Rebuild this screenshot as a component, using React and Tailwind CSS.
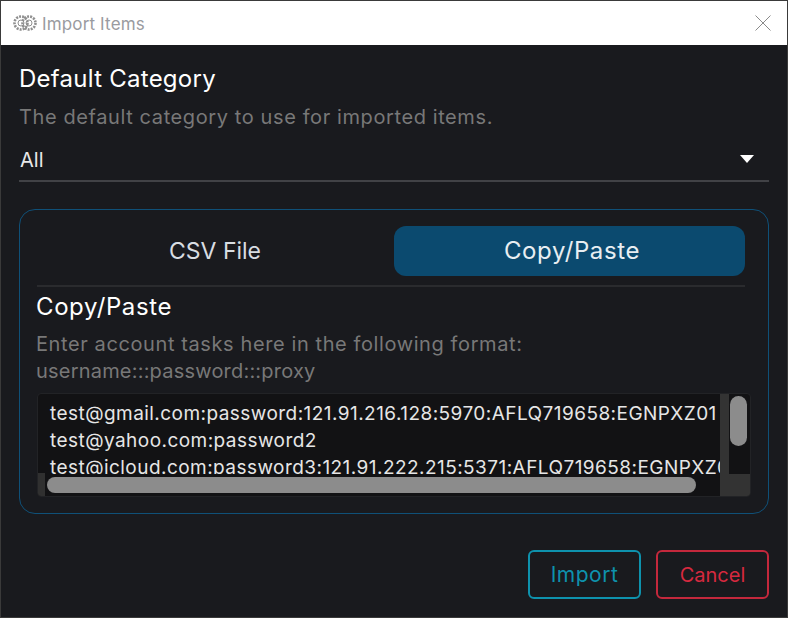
function GearLogo() {
  return (
    <svg width="24" height="18" viewBox="0 0 24 18" fill="none" stroke="#8f8f8f">
      <circle cx="8" cy="9" r="6.5" strokeWidth="2.6" strokeDasharray="2 1.1" />
      <circle cx="16" cy="9" r="6.5" strokeWidth="2.6" strokeDasharray="2 1.1" />
      <circle cx="8" cy="9" r="3" strokeWidth="1" />
      <circle cx="16" cy="9" r="3" strokeWidth="1" />
    </svg>
  );
}

function CloseIcon() {
  return (
    <svg width="16" height="16" viewBox="0 0 16 16" stroke="#8a8a8a" strokeWidth="1">
      <path d="M0.5 0.5 L15.5 15.5 M15.5 0.5 L0.5 15.5" />
    </svg>
  );
}

export default function App() {
  const lines = [
    "test@gmail.com:password:121.91.216.128:5970:AFLQ719658:EGNPXZ01",
    "test@yahoo.com:password2",
    "test@icloud.com:password3:121.91.222.215:5371:AFLQ719658:EGNPXZ01",
  ];

  return (
    <div className="h-[618px] w-[788px] overflow-hidden bg-[#191a1e] border border-[#3a3a3a] font-['Inter',sans-serif]">
      <div className="flex h-[44px] items-center justify-between bg-white pl-[12px] pr-[16px]">
        <div className="flex items-center gap-[5px]">
          <GearLogo />
          <span className="mt-[3px] text-[17px] tracking-[0.15px] text-[#9a9ba0]">Import Items</span>
        </div>
        <CloseIcon />
      </div>

      <div className="px-[18px] pt-[16px]">
        <h2 className="text-[24px] leading-[36px] tracking-[0.25px] text-white">Default Category</h2>
        <p className="mt-[6px] text-[20px] leading-[28px] tracking-[0.6px] text-[#787878]">
          The default category to use for imported items.
        </p>

        <div className="mt-[7px] flex h-[44px] items-center justify-between border-b-2 border-[#414246] pl-[1px] pr-[15px]">
          <span className="mt-[1px] text-[20px] text-[#e8e8e8]">All</span>
          <div className="h-0 w-0 border-x-[7.5px] border-t-[8px] border-x-transparent border-t-white" />
        </div>

        <div className="mt-[27px] h-[305px] rounded-[16px] border border-[#0f5078] px-[17px] pt-[16px]">
          <div className="mr-[6px] flex h-[50px] gap-[8px]">
            <div className="flex flex-1 items-center justify-center pl-[7px] text-[23px] text-[#d8dde2]">CSV File</div>
            <div className="flex w-[351px] items-center justify-center rounded-[12px] bg-[#0b4a6f] pl-[5px] text-[24px] tracking-[0.6px] text-[#e8eef2]">
              Copy/Paste
            </div>
          </div>
          <div className="mr-[6px] mt-[9px] h-[2px] bg-[#2a2b2e]" />
          <h3 className="mt-[2px] -ml-[1px] text-[24px] leading-[36px] tracking-[0.6px] text-white">Copy/Paste</h3>
          <p className="mt-[6px] -ml-[1px] text-[20px] leading-[27px] tracking-[0.6px] text-[#787878]">
            Enter account tasks here in the following format:
            <br />
            <span className="tracking-[0.2px]">username:::password:::proxy</span>
          </p>

          <div className="relative mt-[8px] h-[104px] overflow-hidden rounded-[4px] border border-[#222326] bg-[#121214]">
            <div className="h-[80px] w-[682px] overflow-hidden whitespace-nowrap pl-[12px] pt-[6px] text-[19px] leading-[27px] tracking-[0.45px] text-[#e6e6e6]">
              {lines.map((line) => (
                <div key={line}>{line}</div>
              ))}
            </div>
            <div className="absolute left-0 bottom-0 h-[23px] w-[7px] bg-[#303030]" />
            <div className="absolute left-[9px] bottom-[3px] h-[16px] w-[649px] rounded-full bg-[#8c8c8c]" />
            <div className="absolute right-[21px] top-0 h-[80px] w-[9px] bg-[#333]" />
            <div className="absolute right-[3px] top-[2px] h-[50px] w-[17px] rounded-full bg-[#8c8c8c]" />
            <div className="absolute right-0 bottom-0 h-[22px] w-[30px] bg-[#333]" />
          </div>
        </div>

        <div className="mt-[36px] flex justify-end gap-[15px]">
          <button className="h-[49px] w-[113px] rounded-[6px] border-2 border-[#0e92ad] text-[21px] tracking-[0.5px] text-[#0e92ad]">
            Import
          </button>
          <button className="h-[49px] w-[113px] rounded-[6px] border-2 border-[#c4283c] text-[20px] text-[#d6293f]">
            Cancel
          </button>
        </div>
      </div>
    </div>
  );
}
